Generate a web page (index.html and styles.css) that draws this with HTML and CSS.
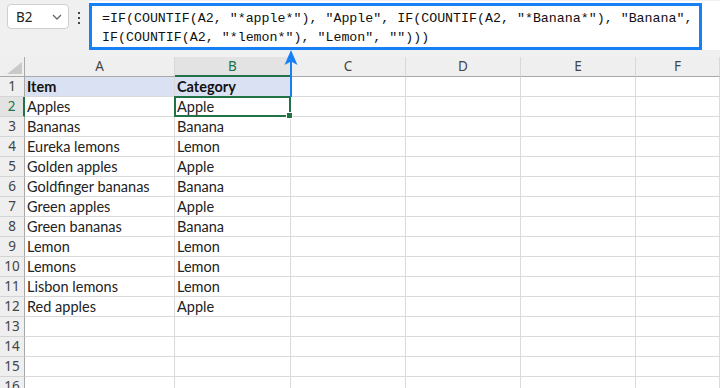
FILE: index.html
```html
<!DOCTYPE html>
<html lang="en">
<head>
  <meta charset="UTF-8">
  <meta name="viewport" content="width=device-width, initial-scale=1.0">
  <title>IF COUNTIF wildcard</title>
  <link rel="stylesheet" href="styles.css">
</head>
<body>
  <div class="toolbar">
    <div class="namebox">
      <span>B2</span>
      <svg class="chevron" width="10" height="6" viewBox="0 0 10 6"><path d="M1 1 L5 5 L9 1" fill="none" stroke="#666" stroke-width="1.3"/></svg>
    </div>
    <div class="dots"><i></i><i></i><i></i></div>
    <div class="formula-wrap">
      <div class="formula">=IF(COUNTIF(A2, "*apple*"), "Apple", IF(COUNTIF(A2, "*Banana*"), "Banana",<br>IF(COUNTIF(A2, "*lemon*"), "Lemon", "")))</div>
    </div>
  </div>

  <div class="sheet">
    <div class="row head">
      <div class="corner"><svg width="15" height="12" viewBox="0 0 15 12"><path d="M15 0 L15 12 L0 12 Z" fill="#c9c9c9"/></svg></div>
      <div>A</div><div class="cur">B</div><div>C</div><div>D</div><div>E</div><div>F</div>
    </div>
    <div class="row"><div class="rn">1</div><div class="th">Item</div><div class="th">Category</div><div></div><div></div><div></div><div></div></div>
    <div class="row"><div class="rn cur">2</div><div>Apples</div><div class="sel">Apple</div><div></div><div></div><div></div><div></div></div>
    <div class="row"><div class="rn">3</div><div>Bananas</div><div>Banana</div><div></div><div></div><div></div><div></div></div>
    <div class="row"><div class="rn">4</div><div>Eureka lemons</div><div>Lemon</div><div></div><div></div><div></div><div></div></div>
    <div class="row"><div class="rn">5</div><div>Golden apples</div><div>Apple</div><div></div><div></div><div></div><div></div></div>
    <div class="row"><div class="rn">6</div><div>Goldfinger bananas</div><div>Banana</div><div></div><div></div><div></div><div></div></div>
    <div class="row"><div class="rn">7</div><div>Green apples</div><div>Apple</div><div></div><div></div><div></div><div></div></div>
    <div class="row"><div class="rn">8</div><div>Green bananas</div><div>Banana</div><div></div><div></div><div></div><div></div></div>
    <div class="row"><div class="rn">9</div><div>Lemon</div><div>Lemon</div><div></div><div></div><div></div><div></div></div>
    <div class="row"><div class="rn">10</div><div>Lemons</div><div>Lemon</div><div></div><div></div><div></div><div></div></div>
    <div class="row"><div class="rn">11</div><div>Lisbon lemons</div><div>Lemon</div><div></div><div></div><div></div><div></div></div>
    <div class="row"><div class="rn">12</div><div>Red apples</div><div>Apple</div><div></div><div></div><div></div><div></div></div>
    <div class="row"><div class="rn">13</div><div></div><div></div><div></div><div></div><div></div><div></div></div>
    <div class="row"><div class="rn">14</div><div></div><div></div><div></div><div></div><div></div><div></div></div>
    <div class="row"><div class="rn">15</div><div></div><div></div><div></div><div></div><div></div><div></div></div>
    <div class="row"><div class="rn">16</div><div></div><div></div><div></div><div></div><div></div><div></div></div>
  </div>

  <!-- arrow pointing from B2 up to the formula -->
  <svg class="arrow" width="14" height="48" viewBox="0 0 14 48">
    <path d="M7 12 L7 48" stroke="#1780f5" stroke-width="2"/>
    <path d="M7 1 L13.5 16 L7 12.5 L0.5 16 Z" fill="#1780f5"/>
  </svg>
</body>
</html>
```

FILE: styles.css
```css
body {
  margin: 0;
  width: 720px;
  height: 388px;
  overflow: hidden;
  background-color: #f0f0f0;
  font-family: Lato, "Liberation Sans", sans-serif;
  color: #222;
  position: relative;
}

/* ===== formula bar ===== */
.toolbar {
  display: flex;
  height: 50px;
}
.namebox {
  margin: 4px 0 0 7px;
  width: 62px;
  height: 25px;
  box-sizing: border-box;
  border: 1px solid #cfcfcf;
  border-radius: 4px;
  background-color: #fff;
  display: flex;
  align-items: center;
  justify-content: space-between;
  padding: 0 6px 0 8px;
  font-family: "Noto Sans", sans-serif;
  font-size: 13.5px;
  color: #222;
}
.chevron {
  margin-top: 1px;
}
.dots {
  width: 20px;
  display: flex;
  flex-direction: column;
  align-items: center;
  gap: 3px;
  padding-top: 12px;
  box-sizing: border-box;
}
.dots i {
  display: block;
  width: 2px;
  height: 2px;
  background-color: #444;
}
.formula-wrap {
  flex: 1;
  background-color: #fff;
  margin-top: 1px;
}
.formula {
  margin-top: 2px;
  width: 613px;
  height: 47px;
  box-sizing: border-box;
  border: 3px solid #1780f5;
  padding: 3px 0 0 10px;
  font-family: "Liberation Mono", monospace;
  font-size: 13.3px;
  line-height: 19px;
  color: #111;
  white-space: nowrap;
}

/* ===== sheet grid ===== */
.sheet {
  margin-top: 7px;
  background-color: #fff;
}
.row {
  display: grid;
  grid-template-columns: 25px 150px 116px 115px 115px 115px 1fr;
  height: 20px;
}
.row > div {
  box-sizing: border-box;
  border-right: 1px solid #dadada;
  border-bottom: 1px solid #dadada;
  padding-left: 2px;
  font-size: 14.5px;
  line-height: 19px;
  white-space: nowrap;
  overflow: hidden;
}
.row.head > div {
  background-color: #efefef;
  border-right-color: #d8d8d8;
  border-bottom-color: #a8a8a8;
  padding: 0;
  text-align: center;
  font-family: "Noto Sans", sans-serif;
  font-size: 13.5px;
  color: #444;
}
.row.head > div.cur {
  border-bottom: 2px solid #217346;
  color: #217346;
  background-color: #e3e3e3;
}
.row.head > .corner {
  border-right-color: #a8a8a8;
  display: flex;
  align-items: flex-end;
  justify-content: flex-end;
  padding: 0 2px 2px 0;
}
.row > .rn {
  background-color: #efefef;
  border-right-color: #a8a8a8;
  border-bottom-color: #d4d4d4;
  padding: 0;
  text-align: center;
  font-family: "Noto Sans", sans-serif;
  font-size: 13.5px;
  color: #444;
}
.row > .rn.cur {
  border-right: 2px solid #217346;
  color: #217346;
  background-color: #e3e3e3;
}
.row > .th {
  background-color: #d9e1f2;
  font-weight: bold;
  color: #111;
}
.row > .sel {
  position: relative;
  overflow: visible;
}
.sel::before {
  content: "";
  position: absolute;
  top: -1px;
  left: -1px;
  right: -1px;
  bottom: -1px;
  border: 2px solid #217346;
}
.sel::after {
  content: "";
  position: absolute;
  right: -2px;
  bottom: -2px;
  width: 5px;
  height: 5px;
  background-color: #217346;
  outline: 1px solid #fff;
}

.arrow {
  position: absolute;
  left: 284px;
  top: 49px;
}
```
